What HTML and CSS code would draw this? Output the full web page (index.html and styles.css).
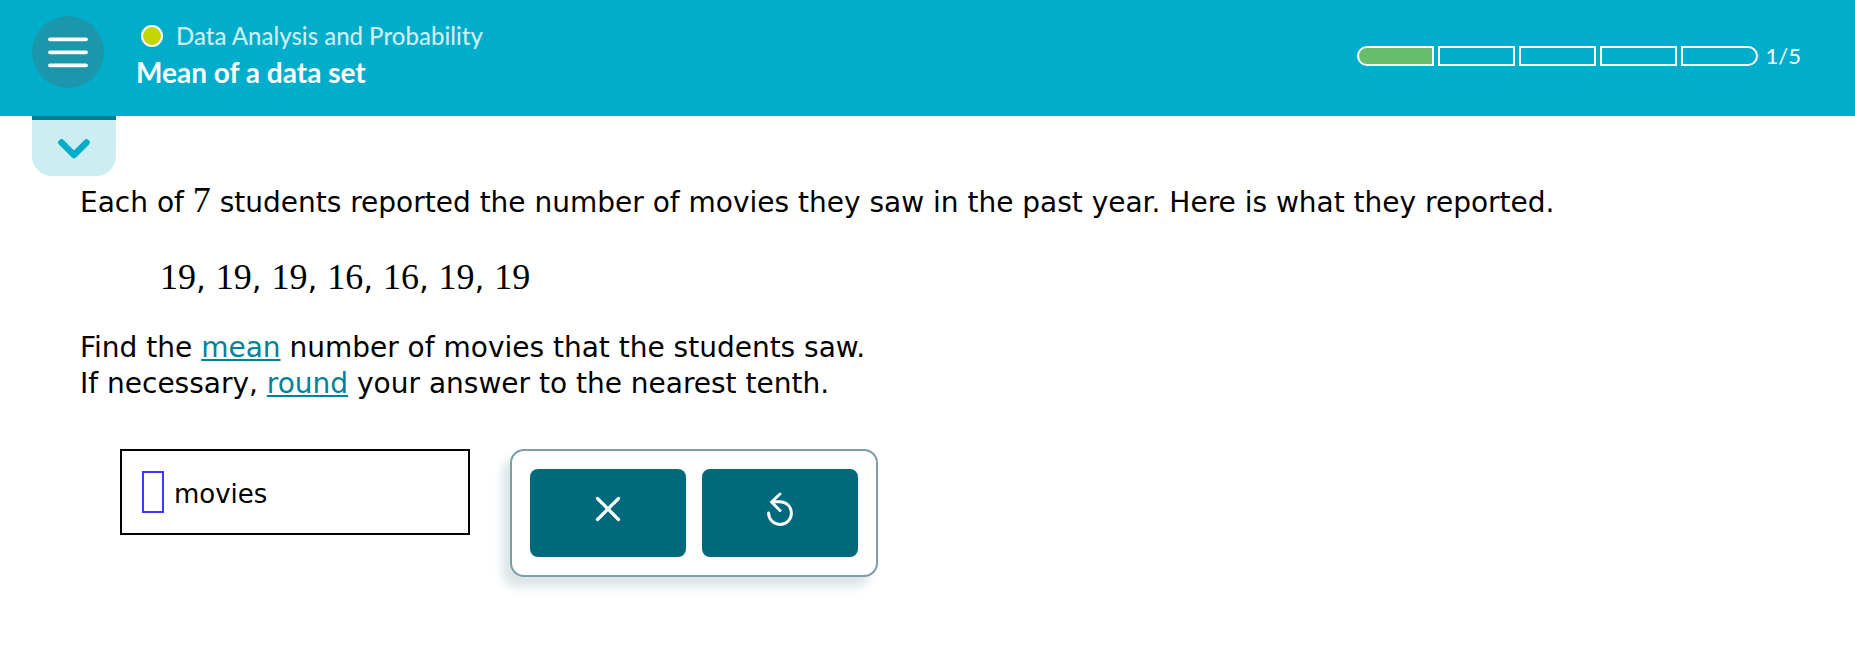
FILE: index.html
```html
<!DOCTYPE html>
<html lang="en">
<head>
<meta charset="utf-8">
<title>Mean of a data set</title>
<link rel="stylesheet" href="styles.css">
</head>
<body>
<header class="topbar">
  <button class="menu" type="button" aria-label="Menu">
    <svg width="40" height="32" viewBox="0 0 40 32"><path d="M2 3.300H38M2 16.300H38M2 29.300H38" stroke="#fff" stroke-width="3.800" stroke-linecap="round"/></svg>
  </button>
  <div class="heading">
    <div class="topic"><span class="dot"></span>Data Analysis and Probability</div>
    <h1 class="title">Mean of a data set</h1>
  </div>
  <div class="progress">
    <div class="segments">
      <span class="segment done"></span><span class="segment"></span><span class="segment"></span><span class="segment"></span><span class="segment"></span>
    </div>
    <span class="count">1/5</span>
  </div>
</header>
<button class="expand" type="button" aria-label="Expand">
  <svg width="32" height="20" viewBox="0 0 32 20"><path d="M3.500 3.500L16 16L28.500 3.500" fill="none" stroke="#00adca" stroke-width="6.500" stroke-linecap="round" stroke-linejoin="round"/></svg>
</button>
<main class="question">
  <p class="line">Each of <span class="num">7</span> students reported the number of movies they saw in the past year. Here is what they reported.</p>
  <p class="line data"><span class="num">19</span>, <span class="num">19</span>, <span class="num">19</span>, <span class="num">16</span>, <span class="num">16</span>, <span class="num">19</span>, <span class="num">19</span></p>
  <p class="line">Find the <a href="#mean">mean</a> number of movies that the students saw.<br>If necessary, <a href="#round">round</a> your answer to the nearest tenth.</p>
  <div class="work">
    <div class="answer">
      <input class="field" id="answer" type="text">
      <label for="answer">movies</label>
    </div>
    <div class="tools">
      <button class="tool" type="button" aria-label="Clear">
        <svg width="40" height="40" viewBox="0 0 40 40"><path d="M9.500 9.500L30.500 30.500M30.500 9.500L9.500 30.500" stroke="#fff" stroke-width="3.200" stroke-linecap="round"/></svg>
      </button>
      <button class="tool" type="button" aria-label="Undo">
        <svg width="40" height="40" viewBox="0 0 40 40"><path d="M8.600 24A11.400 11.400 0 1 0 20 12.700H12M20 5L11.500 13L20 21.500" fill="none" stroke="#fff" stroke-width="2.900" stroke-linecap="round" stroke-linejoin="round"/></svg>
      </button>
    </div>
  </div>
</main>
</body>
</html>
```
FILE: styles.css
```css
* { box-sizing: border-box; }
body {
  margin: 0;
  background: #fff;
  color: #000;
  font: 28px/36px Verdana, "DejaVu Sans", sans-serif;
}
button { border: 0; padding: 0; cursor: pointer; }
svg { display: block; }

.topbar {
  display: flex;
  align-items: flex-start;
  min-height: 116px;
  padding: 16px 54px 0 32px;
  background: #00adca;
  color: #fff;
  font-family: "Proxima Nova", Lato, sans-serif;
}
.menu {
  display: grid;
  place-items: center;
  width: 72px;
  height: 72px;
  border-radius: 50%;
  background: #1b96aa;
}
.heading { margin-left: 32px; }
.topic {
  display: flex;
  align-items: center;
  gap: 13px;
  padding-left: 5px;
  color: #cceff4;
  font-size: 24px;
  font-weight: 500;
  line-height: 40px;
}
.dot {
  width: 22px;
  height: 22px;
  border: 2px solid #fff;
  border-radius: 50%;
  background: #c3d600;
}
.title {
  margin: 0;
  font-size: 28px;
  font-weight: 700;
  line-height: 32px;
}
.progress {
  display: flex;
  align-items: center;
  gap: 8px;
  margin: 22px 0 0 auto;
  font-size: 22px;
  line-height: 36px;
}
.segments { display: flex; gap: 4px; }
.segment {
  width: 77px;
  height: 20px;
  border: 2px solid #fff;
}
.segment:first-child { border-radius: 10px 0 0 10px; }
.segment:last-child { border-radius: 0 10px 10px 0; }
.done { background: #67bf6b; }

.expand {
  display: grid;
  place-items: center;
  width: 84px;
  height: 60px;
  padding-top: 2px;
  margin-left: 32px;
  border-top: 4px solid #007b8f;
  border-radius: 0 0 20px 20px;
  background: #cceef3;
}

.question { padding: 9px 80px 40px; }
.line { margin: 0 0 36px; }
.num { font: 36px/0 "Liberation Serif", serif; }
.data { margin-bottom: 34px; padding: 3px 0 0 80px; font-size: 31px; }
.line a { color: #00829b; text-underline-offset: 2px; text-decoration-thickness: 2px; }

.work {
  display: flex;
  align-items: flex-start;
  gap: 40px;
  padding: 11px 0 0 40px;
}
.answer {
  display: flex;
  align-items: center;
  gap: 10px;
  width: 350px;
  height: 86px;
  padding: 0 20px;
  border: 2px solid #000;
  font-size: 26px;
}
.answer label { padding-top: 4px; }
.field {
  width: 22px;
  height: 42px;
  padding: 0;
  border: 2px solid #3b3bff;
  background: #fff;
  font: inherit;
}
.tools {
  display: flex;
  gap: 16px;
  padding: 18px;
  border: 2px solid #7d9ea7;
  border-radius: 14px;
  background: #fff;
  box-shadow: -8px 10px 10px #dde5e8;
}
.tool {
  display: grid;
  place-items: center;
  width: 156px;
  height: 88px;
  padding-bottom: 8px;
  border-radius: 8px;
  background: #006a7c;
}
```
